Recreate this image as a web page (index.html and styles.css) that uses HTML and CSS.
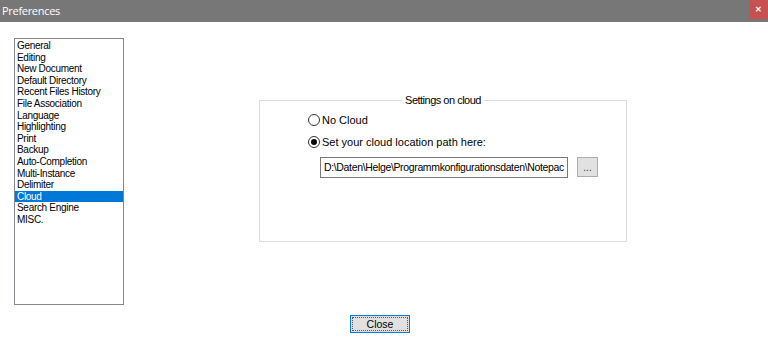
FILE: index.html
```html
<!DOCTYPE html>
<html>
<head>
<meta charset="utf-8">
<title>Preferences</title>
<link rel="stylesheet" href="styles.css">
</head>
<body>
<div class="window">
  <div class="titlebar">
    <span class="title">Preferences</span>
    <span class="close-x">&#x2715;</span>
  </div>
  <div class="content">
    <div class="main">
      <ul class="list">
        <li>General</li>
        <li>Editing</li>
        <li>New Document</li>
        <li>Default Directory</li>
        <li>Recent Files History</li>
        <li>File Association</li>
        <li>Language</li>
        <li>Highlighting</li>
        <li>Print</li>
        <li>Backup</li>
        <li>Auto-Completion</li>
        <li>Multi-Instance</li>
        <li>Delimiter</li>
        <li class="selected">Cloud</li>
        <li>Search Engine</li>
        <li>MISC.</li>
      </ul>
      <fieldset class="group">
        <legend>Settings on cloud</legend>
        <div class="radio-row first"><span class="radio"></span><span>No Cloud</span></div>
        <div class="radio-row"><span class="radio checked"></span><span>Set your cloud location path here:</span></div>
        <div class="path-row">
          <div class="input"><span>D:\Daten\Helge\Programmkonfigurationsdaten\Notepac</span></div>
          <div class="browse">...</div>
        </div>
      </fieldset>
    </div>
    <div class="footer">
      <div class="btn-close"><span>Close</span></div>
    </div>
  </div>
</div>
</body>
</html>
```
FILE: styles.css
```css
* { box-sizing: border-box; }
html, body { margin: 0; padding: 0; background: #fff; }
body { width: 768px; height: 342px; overflow: hidden; font-family: "Liberation Sans", Arial, sans-serif; font-size: 11px; color: #000; }
.window { width: 768px; height: 342px; display: flex; flex-direction: column; }
.titlebar { height: 22px; background: #777777; display: flex; align-items: flex-start; justify-content: space-between; }
.title { color: #fff; font-family: "Open Sans", "Liberation Sans", sans-serif; font-size: 11px; letter-spacing: -0.3px; line-height: 22px; padding-left: 2px; }
.close-x { width: 19px; height: 19px; background: #c75050; color: #fff; font-size: 8px; font-weight: bold; display: flex; align-items: center; justify-content: center; }
.content { flex: 1; display: flex; flex-direction: column; }
.main { display: flex; align-items: flex-start; }
.list { list-style: none; margin: 16px 0 0 14px; padding: 1px 0 0 0; width: 110px; height: 267px; border: 1px solid #828790; font-size: 10px; letter-spacing: -0.3px; }
.list li { line-height: 11.6px; height: 11.6px; padding-left: 2px; white-space: nowrap; }
.list li.selected { background: #0078d7; color: #fff; }
.group { margin: 72px 0 0 135px; width: 368px; height: 148px; border: 1px solid #dcdcdc; padding: 0; }
.group legend { margin: 0 auto; padding: 0 3px; font-size: 11px; letter-spacing: -0.5px; line-height: 12px; }
.radio-row { display: flex; align-items: center; margin-left: 48px; height: 14px; }
.radio-row.first { margin-top: 7px; }
.radio-row + .radio-row { margin-top: 8px; }
.radio { width: 12px; height: 12px; border: 1px solid #333; border-radius: 50%; margin-right: 2px; display: flex; align-items: center; justify-content: center; background: #fff; }
.radio.checked::after { content: ""; width: 6px; height: 6px; border-radius: 50%; background: #000; }
.path-row { display: flex; margin-top: 8px; margin-left: 60px; }
.input { width: 248px; height: 21px; border: 1px solid #7a7a7a; padding: 0 3px; line-height: 19px; white-space: nowrap; overflow: hidden; font-size: 10.5px; letter-spacing: -0.35px; }
.browse { width: 21px; height: 20px; margin-left: 9px; background: #e1e1e1; border: 1px solid #adadad; font-size: 10px; display: flex; align-items: center; justify-content: center; color: #333; }
.footer { display: flex; margin-top: 10px; padding-left: 350px; }
.btn-close { width: 60px; height: 18px; border: 1px solid #0078d7; background: #e1e1e1; padding: 1px; display: flex; }
.btn-close span { flex: 1; border: 1px dotted #555; display: flex; align-items: center; justify-content: center; font-size: 10.5px; }
```
